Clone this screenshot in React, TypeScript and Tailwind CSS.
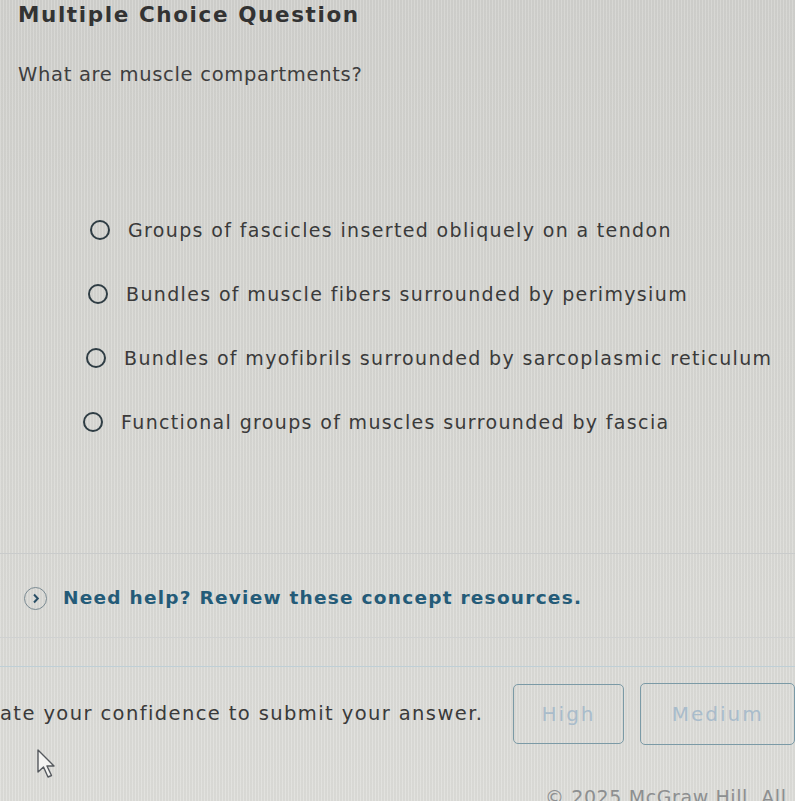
import React from "react";

const options = [
  { text: "Groups of fascicles inserted obliquely on a tendon", shift: "ml-[0px]" },
  { text: "Bundles of muscle fibers surrounded by perimysium", shift: "ml-[-2px]" },
  { text: "Bundles of myofibrils surrounded by sarcoplasmic reticulum", shift: "ml-[-4px]" },
  { text: "Functional groups of muscles surrounded by fascia", shift: "ml-[-7px]" },
];

function Cursor() {
  return (
    <svg width="22" height="32" viewBox="0 0 22 32" className="absolute left-[36px] top-[748px]">
      <path
        d="M2 2 L2 24 L7.5 19 L12 29 L15.5 27.5 L11 18 L18 18 Z"
        fill="#f4f4f2"
        stroke="#55595e"
        strokeWidth="1.4"
        strokeLinejoin="round"
      />
    </svg>
  );
}

export default function App() {
  return (
    <div className="relative w-[795px] h-[801px] overflow-hidden bg-gradient-to-b from-[#d3d3cf] to-[#dfdfdb] font-['DejaVu_Sans',sans-serif] text-[#3b3b3b]">
      <div className="absolute inset-0 bg-[repeating-linear-gradient(90deg,rgba(255,255,255,0.10)_0px,rgba(255,255,255,0.10)_1px,rgba(0,0,0,0.03)_1px,rgba(0,0,0,0.03)_3px)]" />

      <div className="relative">
        <h1 className="pl-[18px] pt-[1px] text-[21.5px] leading-[28px] font-bold tracking-[1.6px] text-[#333]">
          Multiple Choice Question
        </h1>
        <p className="pl-[18px] mt-[32px] text-[19.5px] leading-[28px] tracking-[0.7px] text-[#3e3e3e]">
          What are muscle compartments?
        </p>

        <div className="mt-[127px] flex flex-col gap-[36px] pl-[90px]">
          {options.map((o) => (
            <div key={o.text} className={`flex items-center gap-[18px] h-[28px] ${o.shift}`}>
              <span className="w-[20px] h-[20px] rounded-full border-[2.5px] border-[#2f3d44] shrink-0" />
              <span className="text-[19px] tracking-[1.35px] whitespace-nowrap text-[#3a3a3a]">{o.text}</span>
            </div>
          ))}
        </div>

        <div className="mt-[117px] border-t border-[#c9cbcb]" />

        <div className="mt-[31px] flex items-center gap-[16px] pl-[24px] h-[26px]">
          <span className="w-[23px] h-[23px] rounded-full border-[1.5px] border-[#7a8a92] flex items-center justify-center">
            <svg width="8" height="11" viewBox="0 0 8 11">
              <path d="M2 1.5 L5.8 5.5 L2 9.5" fill="none" stroke="#2a4f66" strokeWidth="2" />
            </svg>
          </span>
          <span className="text-[18.5px] font-bold tracking-[1.25px] text-[#245b78] whitespace-nowrap">
            Need help? Review these concept resources.
          </span>
        </div>

        <div className="mt-[26px] border-t border-[#cfd1d1]" />
        <div className="mt-[28px] border-t border-[#bfcfd6]" />

        <div className="mt-[16px] flex items-center">
          <span className="w-[514px] text-[19.5px] tracking-[1.4px] text-[#3a3a3a] whitespace-nowrap">
            ate your confidence to submit your answer.
          </span>
          <div className="w-[112px] h-[60px] rounded-[5px] border-[1.5px] border-[#7b9aa6] flex items-center justify-center text-[20px] tracking-[2px] text-[#a9bccb]">
            High
          </div>
          <div className="ml-[16px] w-[155px] h-[62px] rounded-[5px] border-[1.5px] border-[#7b9aa6] flex items-center justify-center text-[20px] tracking-[2px] text-[#a9bccb]">
            Medium
          </div>
        </div>

        <div className="mt-[38px] pl-[545px] text-[19px] tracking-[0.6px] text-[#8d8f90] whitespace-nowrap">
          © 2025 McGraw Hill. All
        </div>
      </div>

      <Cursor />
    </div>
  );
}
